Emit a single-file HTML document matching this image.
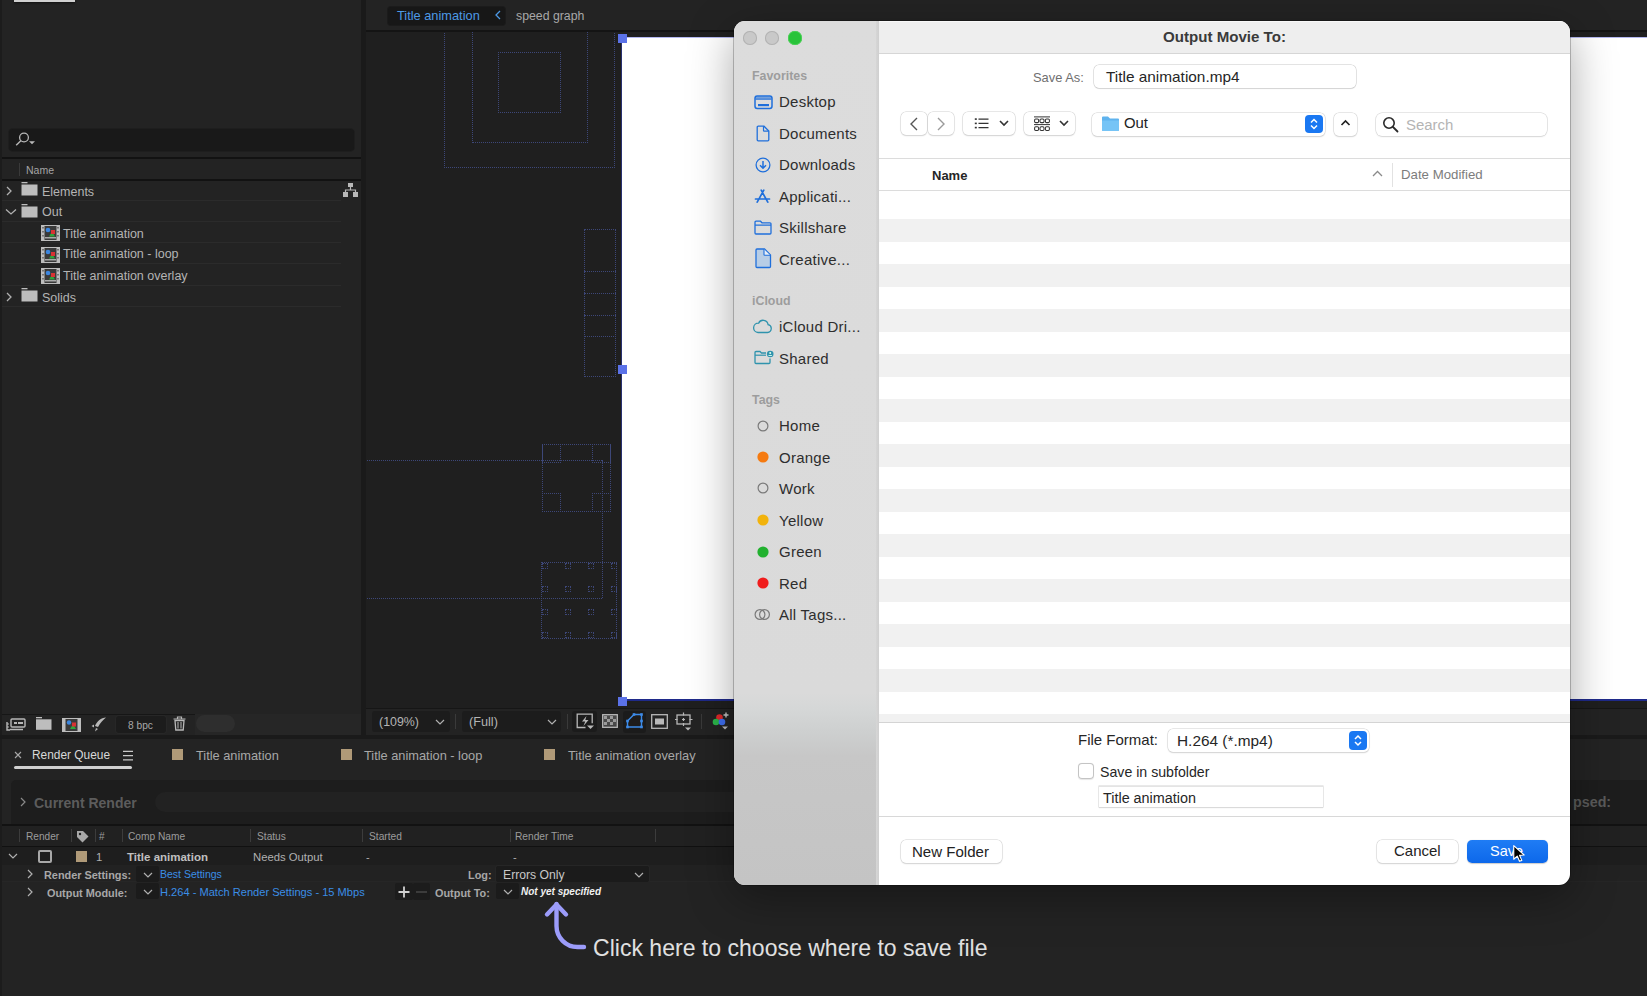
<!DOCTYPE html>
<html><head><meta charset="utf-8">
<style>
*{margin:0;padding:0;box-sizing:border-box}
html,body{width:1647px;height:996px;overflow:hidden;background:#232323;font-family:"Liberation Sans",sans-serif}
.a{position:absolute}
.t{position:absolute;white-space:nowrap;line-height:1}
</style></head><body>
<div class="a" style="left:0;top:0;width:1647px;height:996px;overflow:hidden">

<!-- ============ PROJECT PANEL ============ -->
<div id="proj" class="a" style="left:0;top:0;width:361px;height:735px;background:#232323">
  <div class="a" style="left:0;top:0;width:2px;height:735px;background:#1c1c1c"></div>
  <div class="a" style="left:14px;top:0;width:61px;height:2px;background:#d0d0d0;box-shadow:0 1px 2px #111"></div>
  <div class="a" style="left:9px;top:129px;width:345px;height:22px;background:#191919;border-radius:4px;box-shadow:0 0 0 1px #1e1e1e"></div>
  <svg class="a" style="left:15px;top:132px" width="22" height="16" viewBox="0 0 22 16"><circle cx="9" cy="5.5" r="4.4" fill="none" stroke="#b8b8b8" stroke-width="1.3"/><line x1="5.8" y1="8.7" x2="1.2" y2="13.2" stroke="#b8b8b8" stroke-width="1.4"/><path d="M14 9.2h6l-3 3z" fill="#b8b8b8"/></svg>
  <div class="a" style="left:2px;top:157px;width:359px;height:2px;background:#121212"></div>
  <div class="a" style="left:19px;top:163px;width:1px;height:13px;background:#3a3a3a"></div>
  <div class="t" style="left:26px;top:165px;font-size:10.5px;color:#a5a5a5">Name</div>
  <div class="a" style="left:2px;top:179px;width:359px;height:2px;background:#121212"></div>
  <div class="a" style="left:2px;top:200px;width:339px;height:1px;background:#2b2b2b"></div>
<svg class="a" style="left:5px;top:186px" width="8" height="10" viewBox="0 0 8 10"><path d="M2 1l4 4-4 4" fill="none" stroke="#b0b0b0" stroke-width="1.3"/></svg>
<svg class="a" style="left:21px;top:182px" width="17" height="14" viewBox="0 0 17 14"><rect x="0.5" y="0" width="6" height="1.3" fill="#bdbdbd"/><rect x="0.5" y="2.5" width="16" height="11" fill="#bdbdbd"/></svg>
<div class="t" style="left:42px;top:186px;font-size:12.5px;color:#b4b4b4">Elements</div>
<div class="a" style="left:2px;top:221px;width:339px;height:1px;background:#2b2b2b"></div>
<svg class="a" style="left:5px;top:208px" width="12" height="8" viewBox="0 0 12 8"><path d="M1 1.5l5 4.5 5-4.5" fill="none" stroke="#b0b0b0" stroke-width="1.3"/></svg>
<svg class="a" style="left:21px;top:204px" width="17" height="14" viewBox="0 0 17 14"><rect x="0.5" y="0" width="6" height="1.3" fill="#bdbdbd"/><rect x="0.5" y="2.5" width="16" height="11" fill="#bdbdbd"/></svg>
<div class="t" style="left:42px;top:206px;font-size:12.5px;color:#b4b4b4">Out</div>
<div class="a" style="left:2px;top:242px;width:339px;height:1px;background:#2b2b2b"></div>
<svg class="a" style="left:41px;top:225px" width="19" height="16" viewBox="0 0 19 16"><rect x="0.5" y="0.5" width="18" height="15" fill="#3a3a3a" stroke="#bdbdbd" stroke-width="1"/><rect x="0.5" y="0.5" width="3" height="15" fill="#bdbdbd"/><rect x="15.5" y="0.5" width="3" height="15" fill="#bdbdbd"/><rect x="1.5" y="2" width="1" height="1.5" fill="#333"/><rect x="1.5" y="6" width="1" height="1.5" fill="#333"/><rect x="1.5" y="10" width="1" height="1.5" fill="#333"/><rect x="16.5" y="2" width="1" height="1.5" fill="#333"/><rect x="16.5" y="6" width="1" height="1.5" fill="#333"/><rect x="16.5" y="10" width="1" height="1.5" fill="#333"/><rect x="4" y="12" width="11" height="1.5" fill="#aaa"/><path d="M8 11.5 L11 6.5 L14 11.5Z" fill="#2fa43a"/><rect x="10" y="5" width="4" height="4" fill="#d83232"/><circle cx="7" cy="5" r="2.3" fill="#3b86e0"/></svg>
<div class="t" style="left:63px;top:228px;font-size:12.5px;color:#b4b4b4">Title animation</div>
<div class="a" style="left:2px;top:263px;width:339px;height:1px;background:#2b2b2b"></div>
<svg class="a" style="left:41px;top:247px" width="19" height="16" viewBox="0 0 19 16"><rect x="0.5" y="0.5" width="18" height="15" fill="#3a3a3a" stroke="#bdbdbd" stroke-width="1"/><rect x="0.5" y="0.5" width="3" height="15" fill="#bdbdbd"/><rect x="15.5" y="0.5" width="3" height="15" fill="#bdbdbd"/><rect x="1.5" y="2" width="1" height="1.5" fill="#333"/><rect x="1.5" y="6" width="1" height="1.5" fill="#333"/><rect x="1.5" y="10" width="1" height="1.5" fill="#333"/><rect x="16.5" y="2" width="1" height="1.5" fill="#333"/><rect x="16.5" y="6" width="1" height="1.5" fill="#333"/><rect x="16.5" y="10" width="1" height="1.5" fill="#333"/><rect x="4" y="12" width="11" height="1.5" fill="#aaa"/><path d="M8 11.5 L11 6.5 L14 11.5Z" fill="#2fa43a"/><rect x="10" y="5" width="4" height="4" fill="#d83232"/><circle cx="7" cy="5" r="2.3" fill="#3b86e0"/></svg>
<div class="t" style="left:63px;top:248px;font-size:12.5px;color:#b4b4b4">Title animation - loop</div>
<div class="a" style="left:2px;top:285px;width:339px;height:1px;background:#2b2b2b"></div>
<svg class="a" style="left:41px;top:268px" width="19" height="16" viewBox="0 0 19 16"><rect x="0.5" y="0.5" width="18" height="15" fill="#3a3a3a" stroke="#bdbdbd" stroke-width="1"/><rect x="0.5" y="0.5" width="3" height="15" fill="#bdbdbd"/><rect x="15.5" y="0.5" width="3" height="15" fill="#bdbdbd"/><rect x="1.5" y="2" width="1" height="1.5" fill="#333"/><rect x="1.5" y="6" width="1" height="1.5" fill="#333"/><rect x="1.5" y="10" width="1" height="1.5" fill="#333"/><rect x="16.5" y="2" width="1" height="1.5" fill="#333"/><rect x="16.5" y="6" width="1" height="1.5" fill="#333"/><rect x="16.5" y="10" width="1" height="1.5" fill="#333"/><rect x="4" y="12" width="11" height="1.5" fill="#aaa"/><path d="M8 11.5 L11 6.5 L14 11.5Z" fill="#2fa43a"/><rect x="10" y="5" width="4" height="4" fill="#d83232"/><circle cx="7" cy="5" r="2.3" fill="#3b86e0"/></svg>
<div class="t" style="left:63px;top:270px;font-size:12.5px;color:#b4b4b4">Title animation overlay</div>
<div class="a" style="left:2px;top:306px;width:339px;height:1px;background:#2b2b2b"></div>
<svg class="a" style="left:5px;top:292px" width="8" height="10" viewBox="0 0 8 10"><path d="M2 1l4 4-4 4" fill="none" stroke="#b0b0b0" stroke-width="1.3"/></svg>
<svg class="a" style="left:21px;top:288px" width="17" height="14" viewBox="0 0 17 14"><rect x="0.5" y="0" width="6" height="1.3" fill="#bdbdbd"/><rect x="0.5" y="2.5" width="16" height="11" fill="#bdbdbd"/></svg>
<div class="t" style="left:42px;top:292px;font-size:12.5px;color:#b4b4b4">Solids</div>
  <div class="a" style="left:2px;top:714px;width:193px;height:1px;background:#161616"></div>
  <div class="a" style="left:195px;top:714px;width:166px;height:21px;background:#262626"></div>
  <svg class="a" style="left:6px;top:718px" width="20" height="14" viewBox="0 0 20 14"><rect x="5" y="1" width="14" height="8" rx="1" fill="none" stroke="#b8b8b8" stroke-width="1.4"/><rect x="8" y="4" width="3" height="2" fill="#b8b8b8"/><rect x="12" y="4" width="5" height="2" fill="#b8b8b8"/><path d="M1 4v8h3M4 11.5h13" stroke="#b8b8b8" stroke-width="1.4" fill="none"/><path d="M1 6h2M1 9h2" stroke="#b8b8b8"/></svg>
  <svg class="a" style="left:36px;top:717px" width="16" height="13" viewBox="0 0 16 13"><rect x="0" y="0" width="6" height="1.3" fill="#bdbdbd"/><rect x="0" y="2.3" width="15.5" height="10.5" fill="#bdbdbd"/></svg>
  <svg class="a" style="left:62px;top:718px" width="19" height="14" viewBox="0 0 19 14"><rect x="0.5" y="0.5" width="18" height="13" fill="#3a3a3a" stroke="#bdbdbd" stroke-width="1"/><rect x="0.5" y="0.5" width="3" height="13" fill="#bdbdbd"/><rect x="15.5" y="0.5" width="3" height="13" fill="#bdbdbd"/><path d="M8 11L11 6l3 5z" fill="#2fa43a"/><rect x="10" y="4.5" width="4" height="4" fill="#d83232"/><circle cx="7" cy="4.5" r="2.2" fill="#3b86e0"/></svg>
  <svg class="a" style="left:91px;top:717px" width="16" height="15" viewBox="0 0 16 15"><path d="M15 0.5C10 1 6 4 4 9l3 1c2-4 5-7 8-9.5zM3 7.5L0.5 9 3 10.5zM5 11l-1 3.5 3-2.5z" fill="#b8b8b8"/></svg>
  <div class="a" style="left:116px;top:716px;width:50px;height:17px;background:#1c1c1c;border-radius:3px;box-shadow:0 0 0 1px #272727"></div>
  <div class="t" style="left:128px;top:721px;font-size:10.2px;color:#a8a8a8">8 bpc</div>
  <svg class="a" style="left:173px;top:716px" width="13" height="15" viewBox="0 0 13 15"><path d="M0.5 3h12M4.5 3V1h4v2" fill="none" stroke="#b8b8b8" stroke-width="1.2"/><path d="M2 4.5l0.8 9.5h7.4l0.8-9.5z" fill="none" stroke="#b8b8b8" stroke-width="1.3"/><path d="M5 6v6.5M8 6v6.5" stroke="#b8b8b8" stroke-width="1"/></svg>
  <div class="a" style="left:196px;top:715px;width:39px;height:17px;background:#2e2e2e;border-radius:9px"></div>
<svg class="a" style="left:343px;top:183px" width="15" height="14" viewBox="0 0 15 14"><rect x="5" y="0" width="5" height="4" fill="#b8b8b8"/><path d="M7.5 4v3M2.5 10V7h10v3" fill="none" stroke="#b8b8b8" stroke-width="1.2"/><rect x="0" y="9" width="5" height="5" fill="#b8b8b8"/><rect x="10" y="9" width="5" height="5" fill="#b8b8b8"/></svg>
</div>
<div class="a" style="left:361px;top:0;width:5px;height:738px;background:#1a1a1a"></div>

<!-- ============ VIEWER PANEL ============ -->
<div id="viewer" class="a" style="left:366px;top:0;width:1281px;height:735px;background:#232323">
<div class="a" style="left:0;top:0;width:1281px;height:30px;background:#232323"></div>
<div class="a" style="left:22px;top:7px;width:117px;height:18px;background:#171717;border-radius:3px;box-shadow:0 0 0 1px #1b1b1b"></div>
<div class="t" style="left:31px;top:10px;font-size:12.8px;color:#4d9ae6">Title animation</div>
<svg class="a" style="left:129px;top:10px" width="6" height="10" viewBox="0 0 6 10"><path d="M5 1L1 5l4 4" fill="none" stroke="#4d9ae6" stroke-width="1.3"/></svg>
<div class="t" style="left:150px;top:10px;font-size:12.3px;color:#a8a8a8">speed graph</div>
<div class="a" style="left:0;top:30px;width:1281px;height:2px;background:#141414"></div>
<div class="a" style="left:0;top:32px;width:1281px;height:676px;background:#1f1f1f"></div>
<div class="a" style="left:0;top:32px;width:1281px;height:676px;overflow:hidden"><div class="a" style="left:0;top:-32px;width:1281px;height:708px">
<div class="a" style="left:78px;top:28px;width:171px;height:140px;border:1px dotted #3d4778"></div>
<div class="a" style="left:106px;top:28px;width:116px;height:115px;border:1px dotted #3d4778"></div>
<div class="a" style="left:132px;top:52px;width:63px;height:61px;border:1px dotted #3d4778"></div>
<div class="a" style="left:218px;top:229px;width:32px;height:148px;border:1px dotted #3d4778"></div>
<div class="a" style="left:218px;top:271px;width:32px;height:0;border-top:1px dotted #3d4778"></div>
<div class="a" style="left:218px;top:293px;width:32px;height:0;border-top:1px dotted #3d4778"></div>
<div class="a" style="left:218px;top:315px;width:32px;height:0;border-top:1px dotted #3d4778"></div>
<div class="a" style="left:218px;top:336px;width:32px;height:0;border-top:1px dotted #3d4778"></div>
<div class="a" style="left:1px;top:460px;width:235px;height:0;border-top:1px dotted #3d4778"></div>
<div class="a" style="left:236px;top:460px;width:0;height:138px;border-left:1px dotted #3d4778"></div>
<div class="a" style="left:1px;top:598px;width:235px;height:0;border-top:1px dotted #3d4778"></div>
<div class="a" style="left:176px;top:444px;width:69px;height:68px;border:1px dotted #3d4778"></div>
<div class="a" style="left:176px;top:444px;width:19px;height:19px;border:1px dotted #3d4778"></div>
<div class="a" style="left:226px;top:444px;width:19px;height:19px;border:1px dotted #3d4778"></div>
<div class="a" style="left:176px;top:493px;width:19px;height:19px;border:1px dotted #3d4778"></div>
<div class="a" style="left:226px;top:493px;width:19px;height:19px;border:1px dotted #3d4778"></div>
<div class="a" style="left:175px;top:562px;width:76px;height:77px;border:1px dotted #3d4778"></div>
<div class="a" style="left:175.5px;top:563px;width:6px;height:6px;border:1px dotted #3d4778"></div>
<div class="a" style="left:175.5px;top:586px;width:6px;height:6px;border:1px dotted #3d4778"></div>
<div class="a" style="left:175.5px;top:609px;width:6px;height:6px;border:1px dotted #3d4778"></div>
<div class="a" style="left:175.5px;top:632px;width:6px;height:6px;border:1px dotted #3d4778"></div>
<div class="a" style="left:198.5px;top:563px;width:6px;height:6px;border:1px dotted #3d4778"></div>
<div class="a" style="left:198.5px;top:586px;width:6px;height:6px;border:1px dotted #3d4778"></div>
<div class="a" style="left:198.5px;top:609px;width:6px;height:6px;border:1px dotted #3d4778"></div>
<div class="a" style="left:198.5px;top:632px;width:6px;height:6px;border:1px dotted #3d4778"></div>
<div class="a" style="left:221.5px;top:563px;width:6px;height:6px;border:1px dotted #3d4778"></div>
<div class="a" style="left:221.5px;top:586px;width:6px;height:6px;border:1px dotted #3d4778"></div>
<div class="a" style="left:221.5px;top:609px;width:6px;height:6px;border:1px dotted #3d4778"></div>
<div class="a" style="left:221.5px;top:632px;width:6px;height:6px;border:1px dotted #3d4778"></div>
<div class="a" style="left:244.5px;top:563px;width:6px;height:6px;border:1px dotted #3d4778"></div>
<div class="a" style="left:244.5px;top:586px;width:6px;height:6px;border:1px dotted #3d4778"></div>
<div class="a" style="left:244.5px;top:609px;width:6px;height:6px;border:1px dotted #3d4778"></div>
<div class="a" style="left:244.5px;top:632px;width:6px;height:6px;border:1px dotted #3d4778"></div>
</div></div>
<div class="a" style="left:255px;top:37px;width:1031px;height:664px;background:#fff;border-left:1px solid #283070;border-bottom:2px solid #1f2a8a;border-top:1px solid #b4b8f0"></div>
<div class="a" style="left:252px;top:34px;width:8.5px;height:8.5px;background:#5b72e8"></div>
<div class="a" style="left:252px;top:365px;width:8.5px;height:8.5px;background:#5b72e8"></div>
<div class="a" style="left:252px;top:697px;width:8.5px;height:8.5px;background:#5b72e8"></div>
<div class="a" style="left:0;top:708px;width:1281px;height:1px;background:#161616"></div>
<div class="a" style="left:0;top:709px;width:1281px;height:26px;background:#232323"></div>
<div class="a" style="left:6px;top:711px;width:78px;height:21px;background:#1c1c1c;border-radius:3px"></div>
<div class="t" style="left:13px;top:716px;font-size:12.4px;color:#b4b4b4">(109%)</div>
<svg class="a" style="left:69px;top:719px" width="10" height="6" viewBox="0 0 10 6"><path d="M1 1l4 4 4-4" fill="none" stroke="#b0b0b0" stroke-width="1.2"/></svg>
<div class="a" style="left:89px;top:714px;width:1px;height:15px;background:#3a3a3a"></div>
<div class="a" style="left:96px;top:711px;width:99px;height:21px;background:#1c1c1c;border-radius:3px"></div>
<div class="t" style="left:103px;top:716px;font-size:12.7px;color:#b4b4b4">(Full)</div>
<svg class="a" style="left:181px;top:719px" width="10" height="6" viewBox="0 0 10 6"><path d="M1 1l4 4 4-4" fill="none" stroke="#b0b0b0" stroke-width="1.2"/></svg>
<div class="a" style="left:201px;top:714px;width:1px;height:15px;background:#3a3a3a"></div>
<div class="a" style="left:206px;top:711px;width:25px;height:21px;background:#1b1b1b;border-radius:3px"></div>
<svg class="a" style="left:210px;top:713px" width="19" height="17" viewBox="0 0 19 17"><path d="M9.5 14.5H1.2V1.2h15v9" fill="none" stroke="#b8b8b8" stroke-width="1.3"/><path d="M10.5 3L6 8.5h3.2L7.5 13l5-6H9.3z" fill="#b8b8b8"/><path d="M11 12.5h7l-3.5 3.5z" fill="#b8b8b8"/></svg>
<svg class="a" style="left:236px;top:714px" width="16" height="14" viewBox="0 0 16 14"><rect x="0.7" y="0.7" width="14.6" height="12.6" fill="#444" stroke="#b8b8b8" stroke-width="1.3"/><rect x="2" y="2" width="3" height="3" fill="#9a9a9a"/><rect x="2" y="5" width="3" height="3" fill="#4a4a4a"/><rect x="2" y="8" width="3" height="3" fill="#9a9a9a"/><rect x="5" y="2" width="3" height="3" fill="#4a4a4a"/><rect x="5" y="5" width="3" height="3" fill="#9a9a9a"/><rect x="5" y="8" width="3" height="3" fill="#4a4a4a"/><rect x="8" y="2" width="3" height="3" fill="#9a9a9a"/><rect x="8" y="5" width="3" height="3" fill="#4a4a4a"/><rect x="8" y="8" width="3" height="3" fill="#9a9a9a"/><rect x="11" y="2" width="3" height="3" fill="#4a4a4a"/><rect x="11" y="5" width="3" height="3" fill="#9a9a9a"/><rect x="11" y="8" width="3" height="3" fill="#4a4a4a"/></svg>
<div class="a" style="left:257px;top:711px;width:23px;height:22px;background:#1b1b1b;border-radius:3px"></div>
<svg class="a" style="left:259px;top:712px" width="20" height="18" viewBox="0 0 20 18"><path d="M2.5 9L9 2.5h7.5V15H2.5z" fill="#1e1c1b" stroke="#3d8be8" stroke-width="1.4"/><g fill="#3d8be8"><rect x="1.2" y="7.7" width="2.6" height="2.6"/><rect x="7.7" y="1.2" width="2.6" height="2.6"/><rect x="15.2" y="1.2" width="2.6" height="2.6"/><rect x="15.2" y="7.7" width="2.6" height="2.6"/><rect x="15.2" y="13.7" width="2.6" height="2.6"/><rect x="1.2" y="13.7" width="2.6" height="2.6"/></g></svg>
<svg class="a" style="left:285px;top:714px" width="17" height="15" viewBox="0 0 17 15"><rect x="0.7" y="0.7" width="15.6" height="13.6" fill="none" stroke="#b8b8b8" stroke-width="1.3"/><rect x="4" y="4.5" width="9" height="6" fill="#b8b8b8"/></svg>
<svg class="a" style="left:309px;top:712px" width="18" height="19" viewBox="0 0 18 19"><rect x="2" y="3" width="13" height="9" fill="none" stroke="#b8b8b8" stroke-width="1.3"/><path d="M8.5 0.5v3M8.5 11v3M0 7.5h2.5M14.5 7.5h3M7 7.5h3M8.5 6v3" stroke="#b8b8b8" stroke-width="1.2"/><path d="M10 15.5h6l-3 3z" fill="#b8b8b8"/></svg>
<div class="a" style="left:335px;top:714px;width:1px;height:15px;background:#3a3a3a"></div>
<svg class="a" style="left:345px;top:711px" width="20" height="20" viewBox="0 0 20 20"><circle cx="8.5" cy="6.5" r="3.3" fill="#e02828"/><circle cx="5" cy="11" r="3.3" fill="#2bb54a"/><circle cx="11" cy="11" r="3.3" fill="#3e6ef0"/><path d="M15 1.5v5M12.5 4h5" stroke="#c8c8c8" stroke-width="1.4"/><path d="M11 15.5h6l-3 3z" fill="#bbb"/></svg>
</div>

<!-- strip between panels -->
<div class="a" style="left:0;top:735px;width:1647px;height:4px;background:#1a1a1a"></div>

<!-- ============ RENDER QUEUE ============ -->
<div id="rq" class="a" style="left:0;top:739px;width:1647px;height:257px;background:#232323">
<div class="a" style="left:0;top:0;width:2px;height:257px;background:#1c1c1c;z-index:1"></div>
<svg class="a" style="left:14px;top:12px" width="8" height="8" viewBox="0 0 8 8"><path d="M1 1l6 6M7 1L1 7" stroke="#a8a8a8" stroke-width="1.1"/></svg>
<div class="t" style="left:32px;top:11px;font-size:11.9px;color:#d8d8d8;">Render Queue</div>
<svg class="a" style="left:122.5px;top:11px" width="11" height="12" viewBox="0 0 11 12"><path d="M0 1.4h10M0 5.6h10M0 9.8h10" stroke="#c8c8c8" stroke-width="1.3"/></svg>
<div class="a" style="left:14px;top:27px;width:118px;height:3px;background:#d0d0d0;border-radius:2px"></div>
<div class="a" style="left:172px;top:10px;width:11px;height:11px;background:#b09a78;"></div>
<div class="t" style="left:196px;top:11px;font-size:12.8px;color:#a8a8a8;">Title animation</div>
<div class="a" style="left:341px;top:10px;width:11px;height:11px;background:#b09a78;"></div>
<div class="t" style="left:364px;top:11px;font-size:12.8px;color:#a8a8a8;">Title animation - loop</div>
<div class="a" style="left:544px;top:10px;width:11px;height:11px;background:#b09a78;"></div>
<div class="t" style="left:568px;top:11px;font-size:12.8px;color:#a8a8a8;">Title animation overlay</div>
<div class="a" style="left:11px;top:41px;width:1636px;height:44px;background:#1d1d1d;border-top-left-radius:5px"></div>
<svg class="a" style="left:19.5px;top:58px" width="6" height="10" viewBox="0 0 6 10"><path d="M1 1l4 4-4 4" fill="none" stroke="#8a8a8a" stroke-width="1.2"/></svg>
<div class="t" style="left:34px;top:57px;font-size:14px;color:#5c5c5c;font-weight:bold">Current Render</div>
<div class="a" style="left:155px;top:53px;width:1380px;height:20px;background:#222222;border-radius:10px"></div>
<div class="t" style="left:1573px;top:56px;font-size:14.3px;color:#5a5a5a;font-weight:bold">psed:</div>
<div class="a" style="left:0px;top:85px;width:1647px;height:2px;background:#121212;"></div>
<div class="a" style="left:0px;top:87px;width:1647px;height:20px;background:#212121;"></div>
<div class="a" style="left:19px;top:90px;width:1px;height:13px;background:#3c3c3c;"></div>
<div class="a" style="left:71px;top:90px;width:1px;height:13px;background:#3c3c3c;"></div>
<div class="a" style="left:95px;top:90px;width:1px;height:13px;background:#3c3c3c;"></div>
<div class="a" style="left:122px;top:90px;width:1px;height:13px;background:#3c3c3c;"></div>
<div class="a" style="left:250px;top:90px;width:1px;height:13px;background:#3c3c3c;"></div>
<div class="a" style="left:362px;top:90px;width:1px;height:13px;background:#3c3c3c;"></div>
<div class="a" style="left:510px;top:90px;width:1px;height:13px;background:#3c3c3c;"></div>
<div class="a" style="left:655px;top:90px;width:1px;height:13px;background:#3c3c3c;"></div>
<div class="t" style="left:26px;top:93px;font-size:10.1px;color:#9c9c9c;">Render</div>
<svg class="a" style="left:76px;top:91px" width="13" height="13" viewBox="0 0 13 13"><path d="M1 1h6l5.5 5.5-6 6L1 7z" fill="#a8a8a8"/><circle cx="4" cy="4" r="1.2" fill="#212121"/></svg>
<div class="t" style="left:99px;top:93px;font-size:10px;color:#9c9c9c;">#</div>
<div class="t" style="left:128px;top:93px;font-size:10.2px;color:#9c9c9c;">Comp Name</div>
<div class="t" style="left:257px;top:93px;font-size:10.2px;color:#9c9c9c;">Status</div>
<div class="t" style="left:369px;top:93px;font-size:10.2px;color:#9c9c9c;">Started</div>
<div class="t" style="left:515px;top:93px;font-size:10.2px;color:#9c9c9c;">Render Time</div>
<div class="a" style="left:0px;top:107px;width:1647px;height:1px;background:#111111;"></div>
<div class="a" style="left:0px;top:108px;width:1647px;height:18px;background:#1e1e1e;"></div>
<svg class="a" style="left:8px;top:114px" width="10" height="6" viewBox="0 0 10 6"><path d="M1 1l4 4 4-4" fill="none" stroke="#b0b0b0" stroke-width="1.2"/></svg>
<div class="a" style="left:38px;top:111px;width:14px;height:13px;background:transparent;border:2px solid #a8a8a8;border-radius:2px"></div>
<div class="a" style="left:76px;top:112px;width:11px;height:11px;background:#b09a78;"></div>
<div class="t" style="left:96px;top:113px;font-size:11.3px;color:#b0b0b0;">1</div>
<div class="t" style="left:127px;top:113px;font-size:11.5px;color:#c0c0c0;font-weight:bold">Title animation</div>
<div class="t" style="left:253px;top:113px;font-size:11.3px;color:#b0b0b0;">Needs Output</div>
<div class="t" style="left:366px;top:113px;font-size:11px;color:#b0b0b0;">-</div>
<div class="t" style="left:513px;top:113px;font-size:11px;color:#b0b0b0;">-</div>
<div class="a" style="left:0px;top:126px;width:1647px;height:17px;background:#222222;"></div>
<div class="a" style="left:0px;top:142px;width:1647px;height:1px;background:#262626;"></div>
<svg class="a" style="left:27px;top:130px" width="6" height="10" viewBox="0 0 6 10"><path d="M1 1l4 4-4 4" fill="none" stroke="#b0b0b0" stroke-width="1.2"/></svg>
<div class="t" style="left:44px;top:131px;font-size:10.9px;color:#a8a8a8;font-weight:bold">Render Settings:</div>
<div class="a" style="left:136px;top:127px;width:23px;height:16px;background:#1b1b1b;border-radius:2px"></div>
<svg class="a" style="left:143px;top:133px" width="10" height="6" viewBox="0 0 10 6"><path d="M1 1l4 4 4-4" fill="none" stroke="#b0b0b0" stroke-width="1.2"/></svg>
<div class="t" style="left:160px;top:130px;font-size:10.5px;color:#3b8ee6;">Best Settings</div>
<div class="t" style="left:468px;top:131px;font-size:10.9px;color:#a8a8a8;font-weight:bold">Log:</div>
<div class="a" style="left:496px;top:127px;width:153px;height:16px;background:#1b1b1b;border-radius:2px;box-shadow:0 0 0 1px #262626"></div>
<div class="t" style="left:503px;top:130px;font-size:12.2px;color:#c8c8c8;">Errors Only</div>
<svg class="a" style="left:634px;top:133px" width="10" height="6" viewBox="0 0 10 6"><path d="M1 1l4 4 4-4" fill="none" stroke="#b0b0b0" stroke-width="1.2"/></svg>
<div class="a" style="left:0px;top:143px;width:1647px;height:18px;background:#232323;"></div>
<svg class="a" style="left:27px;top:148px" width="6" height="10" viewBox="0 0 6 10"><path d="M1 1l4 4-4 4" fill="none" stroke="#b0b0b0" stroke-width="1.2"/></svg>
<div class="t" style="left:47px;top:149px;font-size:10.9px;color:#a8a8a8;font-weight:bold">Output Module:</div>
<div class="a" style="left:136px;top:144px;width:23px;height:16px;background:#1b1b1b;border-radius:2px"></div>
<svg class="a" style="left:143px;top:150px" width="10" height="6" viewBox="0 0 10 6"><path d="M1 1l4 4 4-4" fill="none" stroke="#b0b0b0" stroke-width="1.2"/></svg>
<div class="t" style="left:160px;top:148px;font-size:11.1px;color:#3b8ee6;">H.264 - Match Render Settings - 15 Mbps</div>
<div class="a" style="left:395px;top:144px;width:18px;height:17px;background:#1c1c1c;border-radius:2px"></div>
<svg class="a" style="left:398px;top:147px" width="12" height="12" viewBox="0 0 12 12"><path d="M6 0.5v11M0.5 6h11" stroke="#d0d0d0" stroke-width="1.8"/></svg>
<div class="a" style="left:413px;top:144px;width:17px;height:17px;background:#1c1c1c;border-radius:2px"></div>
<div class="a" style="left:416px;top:152px;width:11px;height:1.5px;background:#3c3c3c;"></div>
<div class="t" style="left:435px;top:149px;font-size:10.9px;color:#a8a8a8;font-weight:bold">Output To:</div>
<div class="a" style="left:496px;top:144px;width:23px;height:16px;background:#1b1b1b;border-radius:2px"></div>
<svg class="a" style="left:503px;top:150px" width="10" height="6" viewBox="0 0 10 6"><path d="M1 1l4 4 4-4" fill="none" stroke="#b0b0b0" stroke-width="1.2"/></svg>
<div class="t" style="left:521px;top:148px;font-size:10px;color:#f0f0f0;font-weight:bold;font-style:italic">Not yet specified</div>
<svg class="a" style="left:540px;top:158px" width="50" height="55" viewBox="540 897 50 55"><path d="M556.5 904v22a21 21 0 0 0 21 21h6.5" fill="none" stroke="#9c9cfa" stroke-width="4.4" stroke-linecap="round"/><path d="M547 914.5l9.5-10 9.5 10" fill="none" stroke="#9c9cfa" stroke-width="4.4" stroke-linecap="round" stroke-linejoin="round"/></svg>
<div class="t" style="left:593px;top:198px;font-size:23.06px;color:#e0e0e0;">Click here to choose where to save file</div>
</div>

<!-- ============ DIALOG ============ -->
<div id="dlg" class="a" style="left:734px;top:21px;width:836px;height:864px;border-radius:11px;overflow:hidden;background:#fff;box-shadow:0 0 0 0.5px rgba(0,0,0,.45),0 12px 45px rgba(0,0,0,.35)">
<div class="a" style="left:0px;top:0px;width:145px;height:864px;background:linear-gradient(#dcdcdc 0px,#dadada 672px,#d5d7d7 688px,#cdcfcf 712px,#c7c7c7 735px,#c4c4c4 864px);"></div>
<div class="a" style="left:142px;top:0px;width:3px;height:864px;background:linear-gradient(90deg,#d6d6d6,#cfcfcf);"></div>
<div class="t" style="left:18px;top:49px;font-size:12.4px;color:#9d9d9d;font-weight:bold">Favorites</div>
<div class="t" style="left:45px;top:73px;font-size:15px;color:#2e2e2e;letter-spacing:0.25px;">Desktop</div>
<svg class="a" style="left:20px;top:74px" width="19" height="15" viewBox="0 0 19 15"><rect x="1" y="1" width="17" height="12.5" rx="2.2" fill="none" stroke="#1f6fdb" stroke-width="1.5"/><rect x="1.5" y="1.5" width="16" height="2.6" fill="#1f6fdb" opacity="0.55"/><path d="M1.5 4.2h16" stroke="#1f6fdb" stroke-width="1"/><rect x="4" y="9" width="11" height="2.2" fill="#1f6fdb"/></svg>
<div class="t" style="left:45px;top:105px;font-size:15px;color:#2e2e2e;letter-spacing:0.25px;">Documents</div>
<svg class="a" style="left:22px;top:104px" width="14" height="17" viewBox="0 0 14 17"><path d="M1.2 2.2a1 1 0 0 1 1-1h5.8l4.8 4.8v8.8a1 1 0 0 1-1 1H2.2a1 1 0 0 1-1-1z" fill="none" stroke="#1f6fdb" stroke-width="1.3"/><path d="M7.5 1.2v4.3a.6.6 0 0 0 .6.6h4.6" fill="none" stroke="#1f6fdb" stroke-width="1.2"/></svg>
<div class="t" style="left:45px;top:136px;font-size:15px;color:#2e2e2e;letter-spacing:0.25px;">Downloads</div>
<svg class="a" style="left:21px;top:136px" width="16" height="16" viewBox="0 0 16 16"><circle cx="8" cy="8" r="6.9" fill="none" stroke="#1f6fdb" stroke-width="1.3"/><path d="M8 4v7M5 8.2l3 3 3-3" fill="none" stroke="#1f6fdb" stroke-width="1.5"/></svg>
<div class="t" style="left:45px;top:168px;font-size:15px;color:#2e2e2e;letter-spacing:0.25px;">Applicati...</div>
<svg class="a" style="left:20px;top:167px" width="17" height="16" viewBox="0 0 17 16"><path d="M7.2 2.2L13.8 14.2M9.8 2.2L3.2 14.2M1.5 11h14" fill="none" stroke="#1f6fdb" stroke-width="1.7" stroke-linecap="round"/></svg>
<div class="t" style="left:45px;top:199px;font-size:15px;color:#2e2e2e;letter-spacing:0.25px;">Skillshare</div>
<svg class="a" style="left:20px;top:199px" width="18" height="15" viewBox="0 0 18 15"><path d="M1 2.2a1 1 0 0 1 1-1h4.5l1.5 1.6h8a1 1 0 0 1 1 1v9.2a1 1 0 0 1-1 1H2a1 1 0 0 1-1-1z" fill="none" stroke="#1f6fdb" stroke-width="1.3"/><path d="M1 5.2h16" stroke="#1f6fdb" stroke-width="1.2"/></svg>
<div class="t" style="left:45px;top:231px;font-size:15px;color:#2e2e2e;letter-spacing:0.25px;">Creative...</div>
<svg class="a" style="left:21px;top:227px" width="17" height="21" viewBox="0 0 17 21"><path d="M1 2a1 1 0 0 1 1-1h7.5l6 6v11.5a1 1 0 0 1-1 1H2a1 1 0 0 1-1-1z" fill="#b7cde6" stroke="#1f6fdb" stroke-width="1.3"/><path d="M9 1.2v5.5a.6.6 0 0 0 .6.6h5.6" fill="#e8eef6" stroke="#1f6fdb" stroke-width="1.1"/></svg>
<div class="t" style="left:18px;top:274px;font-size:12.4px;color:#9d9d9d;font-weight:bold">iCloud</div>
<div class="t" style="left:45px;top:298px;font-size:15px;color:#2e2e2e;letter-spacing:0.25px;">iCloud Dri...</div>
<svg class="a" style="left:19px;top:298px" width="20" height="15" viewBox="0 0 20 15"><path d="M5 13.5h9.5a4 4 0 0 0 .6-7.9A5 5 0 0 0 5.6 4.2 4.6 4.6 0 0 0 5 13.5z" fill="none" stroke="#2f93ad" stroke-width="1.3"/></svg>
<div class="t" style="left:45px;top:330px;font-size:15px;color:#2e2e2e;letter-spacing:0.25px;">Shared</div>
<svg class="a" style="left:20px;top:329px" width="20" height="15" viewBox="0 0 20 15"><path d="M1 2.5a1 1 0 0 1 1-1h4l1.5 1.5H12M16 8.5v4a1 1 0 0 1-1 1H2a1 1 0 0 1-1-1V2.5" fill="none" stroke="#2f93ad" stroke-width="1.3"/><path d="M1 5.2h11" stroke="#2f93ad" stroke-width="1.2"/><circle cx="16.2" cy="4" r="3.3" fill="#2f93ad"/><circle cx="16.2" cy="3" r="1" fill="#dfe"/><path d="M14.5 5.5h3.4" stroke="#dfe" stroke-width="0.9"/></svg>
<div class="t" style="left:18px;top:373px;font-size:12.4px;color:#9d9d9d;font-weight:bold">Tags</div>
<div class="t" style="left:45px;top:397px;font-size:15px;color:#2e2e2e;letter-spacing:0.25px;">Home</div>
<svg class="a" style="left:22.5px;top:399px" width="12" height="12" viewBox="0 0 12 12"><circle cx="6" cy="6" r="4.9" fill="none" stroke="#7a7a7a" stroke-width="1.2"/></svg>
<div class="t" style="left:45px;top:429px;font-size:15px;color:#2e2e2e;letter-spacing:0.25px;">Orange</div>
<svg class="a" style="left:22.5px;top:430px" width="12" height="12" viewBox="0 0 12 12"><circle cx="6" cy="6" r="5.6" fill="#f57a10"/></svg>
<div class="t" style="left:45px;top:460px;font-size:15px;color:#2e2e2e;letter-spacing:0.25px;">Work</div>
<svg class="a" style="left:22.5px;top:461px" width="12" height="12" viewBox="0 0 12 12"><circle cx="6" cy="6" r="4.9" fill="none" stroke="#7a7a7a" stroke-width="1.2"/></svg>
<div class="t" style="left:45px;top:492px;font-size:15px;color:#2e2e2e;letter-spacing:0.25px;">Yellow</div>
<svg class="a" style="left:22.5px;top:493px" width="12" height="12" viewBox="0 0 12 12"><circle cx="6" cy="6" r="5.6" fill="#f2b30c"/></svg>
<div class="t" style="left:45px;top:523px;font-size:15px;color:#2e2e2e;letter-spacing:0.25px;">Green</div>
<svg class="a" style="left:22.5px;top:525px" width="12" height="12" viewBox="0 0 12 12"><circle cx="6" cy="6" r="5.6" fill="#22b12f"/></svg>
<div class="t" style="left:45px;top:555px;font-size:15px;color:#2e2e2e;letter-spacing:0.25px;">Red</div>
<svg class="a" style="left:22.5px;top:556px" width="12" height="12" viewBox="0 0 12 12"><circle cx="6" cy="6" r="5.6" fill="#f01c1c"/></svg>
<div class="t" style="left:45px;top:586px;font-size:15px;color:#2e2e2e;letter-spacing:0.25px;">All Tags...</div>
<svg class="a" style="left:20px;top:587px" width="17" height="13" viewBox="0 0 17 13"><circle cx="6" cy="6.5" r="4.9" fill="none" stroke="#7a7a7a" stroke-width="1.2"/><circle cx="10.5" cy="6.5" r="4.9" fill="none" stroke="#7a7a7a" stroke-width="1.2"/></svg>
<div class="a" style="left:9px;top:10px;width:13.6px;height:13.6px;background:#c9c9c9;border-radius:50%;box-shadow:inset 0 0 0 1px #b3b3b3"></div>
<div class="a" style="left:31px;top:10px;width:13.6px;height:13.6px;background:#c9c9c9;border-radius:50%;box-shadow:inset 0 0 0 1px #b3b3b3"></div>
<div class="a" style="left:54px;top:10px;width:13.6px;height:13.6px;background:#29c33a;border-radius:50%;box-shadow:inset 0 0 0 0.8px #4fd25a"></div>
<div class="a" style="left:145px;top:0px;width:691px;height:32px;background:#eeeeee;box-shadow:inset 0 1px 0 #f8f8f8"></div>
<div class="a" style="left:145px;top:32px;width:691px;height:1px;background:#d6d6d6;"></div>
<div class="t" style="left:429px;top:8px;font-size:15.1px;color:#3a3a3a;font-weight:bold">Output Movie To:</div>
<div class="t" style="left:299px;top:51px;font-size:12.9px;color:#707070;">Save As:</div>
<div class="a" style="left:360px;top:44px;width:262px;height:23px;background:#fff;border-radius:5px;box-shadow:0 0 0 0.5px #c8c8c8,0 1px 1px rgba(0,0,0,.12)"></div>
<div class="t" style="left:372px;top:48px;font-size:15.38px;color:#262626;">Title animation.mp4</div>
<div class="a" style="left:167px;top:91px;width:26px;height:23px;background:#fff;border-radius:5px;box-shadow:0 0 0 0.5px #cfcfcf,0 1px 1.5px rgba(0,0,0,.15)"></div>
<div class="a" style="left:194px;top:91px;width:26px;height:23px;background:#fff;border-radius:5px;box-shadow:0 0 0 0.5px #cfcfcf,0 1px 1.5px rgba(0,0,0,.15)"></div>
<svg class="a" style="left:174px;top:95px" width="12" height="16" viewBox="0 0 12 16"><path d="M9 2L3 8l6 6" fill="none" stroke="#555" stroke-width="1.4"/></svg>
<svg class="a" style="left:201px;top:95px" width="12" height="16" viewBox="0 0 12 16"><path d="M3 2l6 6-6 6" fill="none" stroke="#9a9a9a" stroke-width="1.4"/></svg>
<div class="a" style="left:229px;top:91px;width:52px;height:23px;background:#fff;border-radius:5px;box-shadow:0 0 0 0.5px #cfcfcf,0 1px 1.5px rgba(0,0,0,.15)"></div>
<svg class="a" style="left:240px;top:96px" width="16" height="12" viewBox="0 0 16 12"><rect x="0.8" y="1.3" width="2" height="1.6" fill="#333"/><rect x="0.8" y="5.6" width="2" height="1.6" fill="#333"/><rect x="0.8" y="9.8" width="2" height="1.6" fill="#333"/><path d="M4.5 2.1h10M4.5 6.4h10M4.5 10.6h10" stroke="#333" stroke-width="1.3"/></svg>
<svg class="a" style="left:265px;top:99px" width="10" height="7" viewBox="0 0 10 7"><path d="M1 1l4 4 4-4" fill="none" stroke="#333" stroke-width="1.6"/></svg>
<div class="a" style="left:290px;top:91px;width:51px;height:23px;background:#fff;border-radius:5px;box-shadow:0 0 0 0.5px #cfcfcf,0 1px 1.5px rgba(0,0,0,.15)"></div>
<svg class="a" style="left:300px;top:95px" width="17" height="17" viewBox="0 0 17 17"><path d="M0 0.9h16M0 8.6h16" stroke="#333" stroke-width="1"/><g fill="none" stroke="#333" stroke-width="1.05"><rect x="0.6" y="3" width="4" height="3.6" rx="1.1"/><rect x="6" y="3" width="4" height="3.6" rx="1.1"/><rect x="11.4" y="3" width="4" height="3.6" rx="1.1"/><rect x="0.6" y="10.8" width="4" height="3.6" rx="1.1"/><rect x="6" y="10.8" width="4" height="3.6" rx="1.1"/><rect x="11.4" y="10.8" width="4" height="3.6" rx="1.1"/></g></svg>
<svg class="a" style="left:325px;top:99px" width="10" height="7" viewBox="0 0 10 7"><path d="M1 1l4 4 4-4" fill="none" stroke="#333" stroke-width="1.6"/></svg>
<div class="a" style="left:358px;top:92px;width:233px;height:23px;background:#fff;border-radius:5px;box-shadow:0 0 0 0.5px #cfcfcf,0 1px 1.5px rgba(0,0,0,.15)"></div>
<svg class="a" style="left:367px;top:94px" width="19" height="17" viewBox="0 0 19 17"><path d="M1 2.5a1 1 0 0 1 1-1h5l2 2h8a1 1 0 0 1 1 1V15a1 1 0 0 1-1 1H2a1 1 0 0 1-1-1z" fill="#5fb3ee"/><path d="M1 5.5h17V15a1 1 0 0 1-1 1H2a1 1 0 0 1-1-1z" fill="#76c4f6"/></svg>
<div class="t" style="left:390px;top:95px;font-size:14.9px;color:#222;">Out</div>
<div class="a" style="left:571px;top:94px;width:18px;height:18px;background:#1a78f2;border-radius:4px"></div>
<svg class="a" style="left:574px;top:96px" width="12" height="14" viewBox="0 0 12 14"><path d="M3 5.5l3-3 3 3M3 8.5l3 3 3-3" fill="none" stroke="#fff" stroke-width="1.5"/></svg>
<div class="a" style="left:600px;top:92px;width:23px;height:23px;background:#fff;border-radius:5px;box-shadow:0 0 0 0.5px #cfcfcf,0 1px 1.5px rgba(0,0,0,.15)"></div>
<svg class="a" style="left:606px;top:98px" width="11" height="8" viewBox="0 0 11 8"><path d="M1.5 6l4-4 4 4" fill="none" stroke="#222" stroke-width="1.7"/></svg>
<div class="a" style="left:642px;top:92px;width:171px;height:23px;background:#fff;border-radius:6px;box-shadow:0 0 0 0.5px #cfcfcf,0 1px 1.5px rgba(0,0,0,.12)"></div>
<svg class="a" style="left:648px;top:95px" width="18" height="17" viewBox="0 0 18 17"><circle cx="7" cy="7" r="5.2" fill="none" stroke="#2a2a2a" stroke-width="1.6"/><path d="M11 11l4.5 4.5" stroke="#2a2a2a" stroke-width="1.8" stroke-linecap="round"/></svg>
<div class="t" style="left:672px;top:97px;font-size:14.96px;color:#b4b4b4;">Search</div>
<div class="a" style="left:145px;top:137px;width:691px;height:1px;background:#dcdcdc;"></div>
<div class="t" style="left:198px;top:148px;font-size:13.0px;color:#262626;font-weight:bold">Name</div>
<svg class="a" style="left:638px;top:149px" width="11" height="7" viewBox="0 0 11 7"><path d="M1 6l4.5-4.5L10 6" fill="none" stroke="#8a8a8a" stroke-width="1.3"/></svg>
<div class="a" style="left:658px;top:142px;width:1px;height:24px;background:#e2e2e2;"></div>
<div class="t" style="left:667px;top:147px;font-size:13.24px;color:#7c7c7c;">Date Modified</div>
<div class="a" style="left:145px;top:169px;width:691px;height:1px;background:#dcdcdc;"></div>
<div class="a" style="left:145px;top:198px;width:691px;height:23px;background:#f1f1f1;"></div>
<div class="a" style="left:145px;top:243px;width:691px;height:23px;background:#f1f1f1;"></div>
<div class="a" style="left:145px;top:288px;width:691px;height:23px;background:#f1f1f1;"></div>
<div class="a" style="left:145px;top:333px;width:691px;height:23px;background:#f1f1f1;"></div>
<div class="a" style="left:145px;top:378px;width:691px;height:23px;background:#f1f1f1;"></div>
<div class="a" style="left:145px;top:423px;width:691px;height:23px;background:#f1f1f1;"></div>
<div class="a" style="left:145px;top:468px;width:691px;height:23px;background:#f1f1f1;"></div>
<div class="a" style="left:145px;top:513px;width:691px;height:23px;background:#f1f1f1;"></div>
<div class="a" style="left:145px;top:558px;width:691px;height:23px;background:#f1f1f1;"></div>
<div class="a" style="left:145px;top:603px;width:691px;height:23px;background:#f1f1f1;"></div>
<div class="a" style="left:145px;top:648px;width:691px;height:23px;background:#f1f1f1;"></div>
<div class="a" style="left:145px;top:693px;width:691px;height:8px;background:#f1f1f1;"></div>
<div class="a" style="left:145px;top:701px;width:691px;height:1px;background:#d4d4d4;"></div>
<div class="t" style="left:344px;top:711px;font-size:15px;color:#262626;">File Format:</div>
<div class="a" style="left:434px;top:708px;width:201px;height:23px;background:#fff;border-radius:5px;box-shadow:0 0 0 0.5px #cfcfcf,0 1px 1.5px rgba(0,0,0,.15)"></div>
<div class="t" style="left:443px;top:712px;font-size:15.4px;color:#262626;">H.264 (*.mp4)</div>
<div class="a" style="left:615px;top:710px;width:18px;height:19px;background:#1a78f2;border-radius:4px"></div>
<svg class="a" style="left:618px;top:712px" width="12" height="15" viewBox="0 0 12 15"><path d="M3 6l3-3 3 3M3 9l3 3 3-3" fill="none" stroke="#fff" stroke-width="1.5"/></svg>
<div class="a" style="left:344px;top:742px;width:16px;height:16px;background:#fff;border-radius:4px;box-shadow:inset 0 0 0 1px #c4c4c4,0 0.5px 1px rgba(0,0,0,.1)"></div>
<div class="t" style="left:366px;top:744px;font-size:14.16px;color:#262626;">Save in subfolder</div>
<div class="a" style="left:365px;top:765px;width:224px;height:21px;background:#fff;box-shadow:inset 0 1px 0 #e4e4e4,0 0 0 0.5px #d4d4d4,0 1px 1px rgba(0,0,0,.12)"></div>
<div class="t" style="left:369px;top:770px;font-size:14.38px;color:#262626;">Title animation</div>
<div class="a" style="left:145px;top:795px;width:691px;height:1px;background:#d8d8d8;"></div>
<div class="a" style="left:167px;top:819px;width:101px;height:23px;background:#fff;border-radius:5px;box-shadow:0 0 0 0.5px #cfcfcf,0 1px 1.5px rgba(0,0,0,.15)"></div>
<div class="t" style="left:178px;top:823px;font-size:15.06px;color:#222;">New Folder</div>
<div class="a" style="left:643px;top:819px;width:81px;height:23px;background:#fff;border-radius:5px;box-shadow:0 0 0 0.5px #cfcfcf,0 1px 1.5px rgba(0,0,0,.15)"></div>
<div class="t" style="left:660px;top:823px;font-size:14.97px;color:#222;">Cancel</div>
<div class="a" style="left:733px;top:819px;width:81px;height:23px;background:linear-gradient(#1f7cf5,#0d68ea);border-radius:5px;box-shadow:0 0.5px 1px rgba(0,0,0,.2)"></div>
<div class="t" style="left:756px;top:823px;font-size:14.5px;color:#fff;">Save</div>
<svg class="a" style="left:778px;top:823px" width="14" height="20" viewBox="0 0 16 22"><path d="M2 1.5v15.5l4-3.6 2.6 6 2.6-1.1-2.6-5.9 5.3-.3z" fill="#000" stroke="#fff" stroke-width="1.3" stroke-linejoin="round"/></svg>
</div>

</div>
</body></html>
